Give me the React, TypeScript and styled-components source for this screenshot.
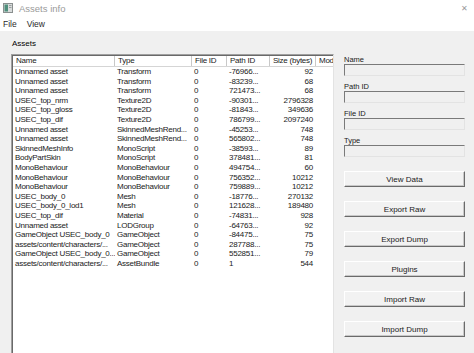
import styled, { createGlobalStyle } from "styled-components";

const GlobalStyle = createGlobalStyle`
  html, body {
    margin: 0;
    padding: 0;
    background: #ffffff;
  }
  * {
    box-sizing: border-box;
  }
`;

interface iAsset {
  name: string;
  type: string;
  fileId: string;
  pathId: string;
  size: string;
}

const assets: iAsset[] = [
  { name: "Unnamed asset", type: "Transform", fileId: "0", pathId: "-76966...", size: "92" },
  { name: "Unnamed asset", type: "Transform", fileId: "0", pathId: "-83239...", size: "68" },
  { name: "Unnamed asset", type: "Transform", fileId: "0", pathId: "721473...", size: "68" },
  { name: "USEC_top_nrm", type: "Texture2D", fileId: "0", pathId: "-90301...", size: "2796328" },
  { name: "USEC_top_gloss", type: "Texture2D", fileId: "0", pathId: "-81843...", size: "349636" },
  { name: "USEC_top_dif", type: "Texture2D", fileId: "0", pathId: "786799...", size: "2097240" },
  { name: "Unnamed asset", type: "SkinnedMeshRend...", fileId: "0", pathId: "-45253...", size: "748" },
  { name: "Unnamed asset", type: "SkinnedMeshRend...", fileId: "0", pathId: "565802...", size: "748" },
  { name: "SkinnedMeshInfo", type: "MonoScript", fileId: "0", pathId: "-38593...", size: "89" },
  { name: "BodyPartSkin", type: "MonoScript", fileId: "0", pathId: "378481...", size: "81" },
  { name: "MonoBehaviour", type: "MonoBehaviour", fileId: "0", pathId: "494754...", size: "60" },
  { name: "MonoBehaviour", type: "MonoBehaviour", fileId: "0", pathId: "756352...", size: "10212" },
  { name: "MonoBehaviour", type: "MonoBehaviour", fileId: "0", pathId: "759889...", size: "10212" },
  { name: "USEC_body_0", type: "Mesh", fileId: "0", pathId: "-18776...", size: "270132" },
  { name: "USEC_body_0_lod1", type: "Mesh", fileId: "0", pathId: "121628...", size: "189480" },
  { name: "USEC_top_dif", type: "Material", fileId: "0", pathId: "-74831...", size: "928" },
  { name: "Unnamed asset", type: "LODGroup", fileId: "0", pathId: "-64763...", size: "92" },
  { name: "GameObject USEC_body_0", type: "GameObject", fileId: "0", pathId: "-84475...", size: "75" },
  { name: "assets/content/characters/...", type: "GameObject", fileId: "0", pathId: "287788...", size: "75" },
  { name: "GameObject USEC_body_0...", type: "GameObject", fileId: "0", pathId: "552851...", size: "79" },
  { name: "assets/content/characters/...", type: "AssetBundle", fileId: "0", pathId: "1", size: "544" },
];

const fields = ["Name", "Path ID", "File ID", "Type"];
const actions = ["View Data", "Export Raw", "Export Dump", "Plugins", "Import Raw", "Import Dump"];

export default function App() {
  return (
    <>
      <GlobalStyle />
      <StyledWindow>
        <TitleBar>
          <WindowIcon width="10" height="10" viewBox="0 0 10 10">
            <rect x="0.5" y="0.5" width="9" height="9" fill="#d9dcdc" stroke="#8a8f8f" />
            <rect x="1.5" y="1.5" width="3.5" height="7" fill="#4f8f7c" />
            <rect x="6" y="2" width="2.5" height="1" fill="#9aa0a0" />
            <rect x="6" y="4" width="2.5" height="1" fill="#9aa0a0" />
          </WindowIcon>
          <span className="title">Assets info</span>
          <CloseGlyph>✕</CloseGlyph>
        </TitleBar>
        <MenuBar>
          <span>File</span>
          <span>View</span>
        </MenuBar>
        <Client>
          <LeftColumn>
            <GroupLabel>Assets</GroupLabel>
            <ListBox>
              <HeaderRow>
                <HeaderCell>Name</HeaderCell>
                <HeaderCell>Type</HeaderCell>
                <HeaderCell>File ID</HeaderCell>
                <HeaderCell>Path ID</HeaderCell>
                <HeaderCell>Size (bytes)</HeaderCell>
                <HeaderCell>Modified</HeaderCell>
              </HeaderRow>
              {assets.map((a, i) => (
                <Row key={i}>
                  <Cell>{a.name}</Cell>
                  <Cell>{a.type}</Cell>
                  <Cell>{a.fileId}</Cell>
                  <Cell>{a.pathId}</Cell>
                  <Cell $right>{a.size}</Cell>
                  <Cell></Cell>
                </Row>
              ))}
            </ListBox>
          </LeftColumn>
          <SidePanel>
            {fields.map((f) => (
              <Field key={f}>
                <FieldLabel>{f}</FieldLabel>
                <TextBox />
              </Field>
            ))}
            <Buttons>
              {actions.map((a) => (
                <Button key={a}>{a}</Button>
              ))}
            </Buttons>
          </SidePanel>
        </Client>
      </StyledWindow>
    </>
  );
}

const StyledWindow = styled.div`
  width: 474px;
  height: 353px;
  overflow: hidden;
  display: flex;
  flex-direction: column;
  font-family: "Liberation Sans", Arial, sans-serif;
  font-size: 8px;
  color: #000;
`;

const TitleBar = styled.div`
  height: 16px;
  flex: none;
  display: flex;
  align-items: center;
  padding: 0 3px;
  background: #ffffff;

  .title {
    margin-left: 6px;
    font-size: 9.5px;
    color: #9a9a9a;
  }
`;

const WindowIcon = styled.svg`
  display: block;
  flex: none;
`;

const CloseGlyph = styled.span`
  margin-left: auto;
  margin-right: 3px;
  font-size: 8px;
  color: #9a9a9a;
`;

const MenuBar = styled.div`
  height: 15px;
  flex: none;
  display: flex;
  align-items: center;
  gap: 10px;
  padding: 0 3px;
  background: #ffffff;
  font-size: 8.5px;

  span {
    color: #2a2a2a;
  }
`;

const Client = styled.div`
  flex: 1;
  min-height: 0;
  display: flex;
  gap: 10px;
  padding: 8px 0 0 11px;
  background: #f0f0f0;
`;

const LeftColumn = styled.div`
  width: 323px;
  flex: none;
  display: flex;
  flex-direction: column;
`;

const GroupLabel = styled.div`
  height: 10px;
  line-height: 10px;
  margin-bottom: 5px;
  padding-left: 1px;
`;

const ListBox = styled.div`
  flex: 1;
  overflow: hidden;
  background: #ffffff;
  border-top: 1px solid #a0a0a0;
  border-left: 1px solid #a0a0a0;
  border-right: 1px solid #e3e3e3;
  box-shadow: inset 1px 1px 0 #696969;
  padding-left: 1px;
  letter-spacing: -0.25px;
`;

const columns = "102px 77px 35px 43px 46px 40px";

const HeaderRow = styled.div`
  display: grid;
  grid-template-columns: ${columns};
  height: 11px;
  border-bottom: 1px solid #d5d5d5;
  margin-top: 1px;
`;

const HeaderCell = styled.div`
  line-height: 10px;
  padding-left: 3px;
  border-right: 1px solid #c8c8c8;
  white-space: nowrap;
  overflow: hidden;
  color: #1a1a1a;
`;

const Row = styled.div`
  display: grid;
  grid-template-columns: ${columns};
  height: 9.6px;
  line-height: 9.6px;
`;

const Cell = styled.div<{ $right?: boolean }>`
  padding: 0 3px 0 2px;
  white-space: nowrap;
  overflow: hidden;
  text-align: ${(p) => (p.$right ? "right" : "left")};
  color: #1a1a1a;
`;

const SidePanel = styled.div`
  width: 121px;
  flex: none;
  display: flex;
  flex-direction: column;
  padding-top: 16px;
`;

const Field = styled.div`
  display: flex;
  flex-direction: column;
  margin-bottom: 6px;
`;

const FieldLabel = styled.div`
  height: 9px;
  line-height: 9px;
  font-size: 7.5px;
  color: #1a1a1a;
`;

const TextBox = styled.div`
  height: 12px;
  background: #f0f0f0;
  border-top: 1px solid #7a7a7a;
  border-left: 1px solid #7a7a7a;
  border-right: 1px solid #e3e3e3;
  border-bottom: 1px solid #e3e3e3;
`;

const Buttons = styled.div`
  display: flex;
  flex-direction: column;
  gap: 14px;
  margin-top: 8px;
`;

const Button = styled.button`
  height: 16px;
  padding: 0;
  font-family: inherit;
  font-size: 8px;
  color: #1a1a1a;
  background: #f2f2f2;
  border-top: 1px solid #ffffff;
  border-left: 1px solid #ffffff;
  border-right: 1px solid #6a6a6a;
  border-bottom: 1px solid #6a6a6a;
  box-shadow: inset -1px -1px 0 #c8c8c8;
`;
